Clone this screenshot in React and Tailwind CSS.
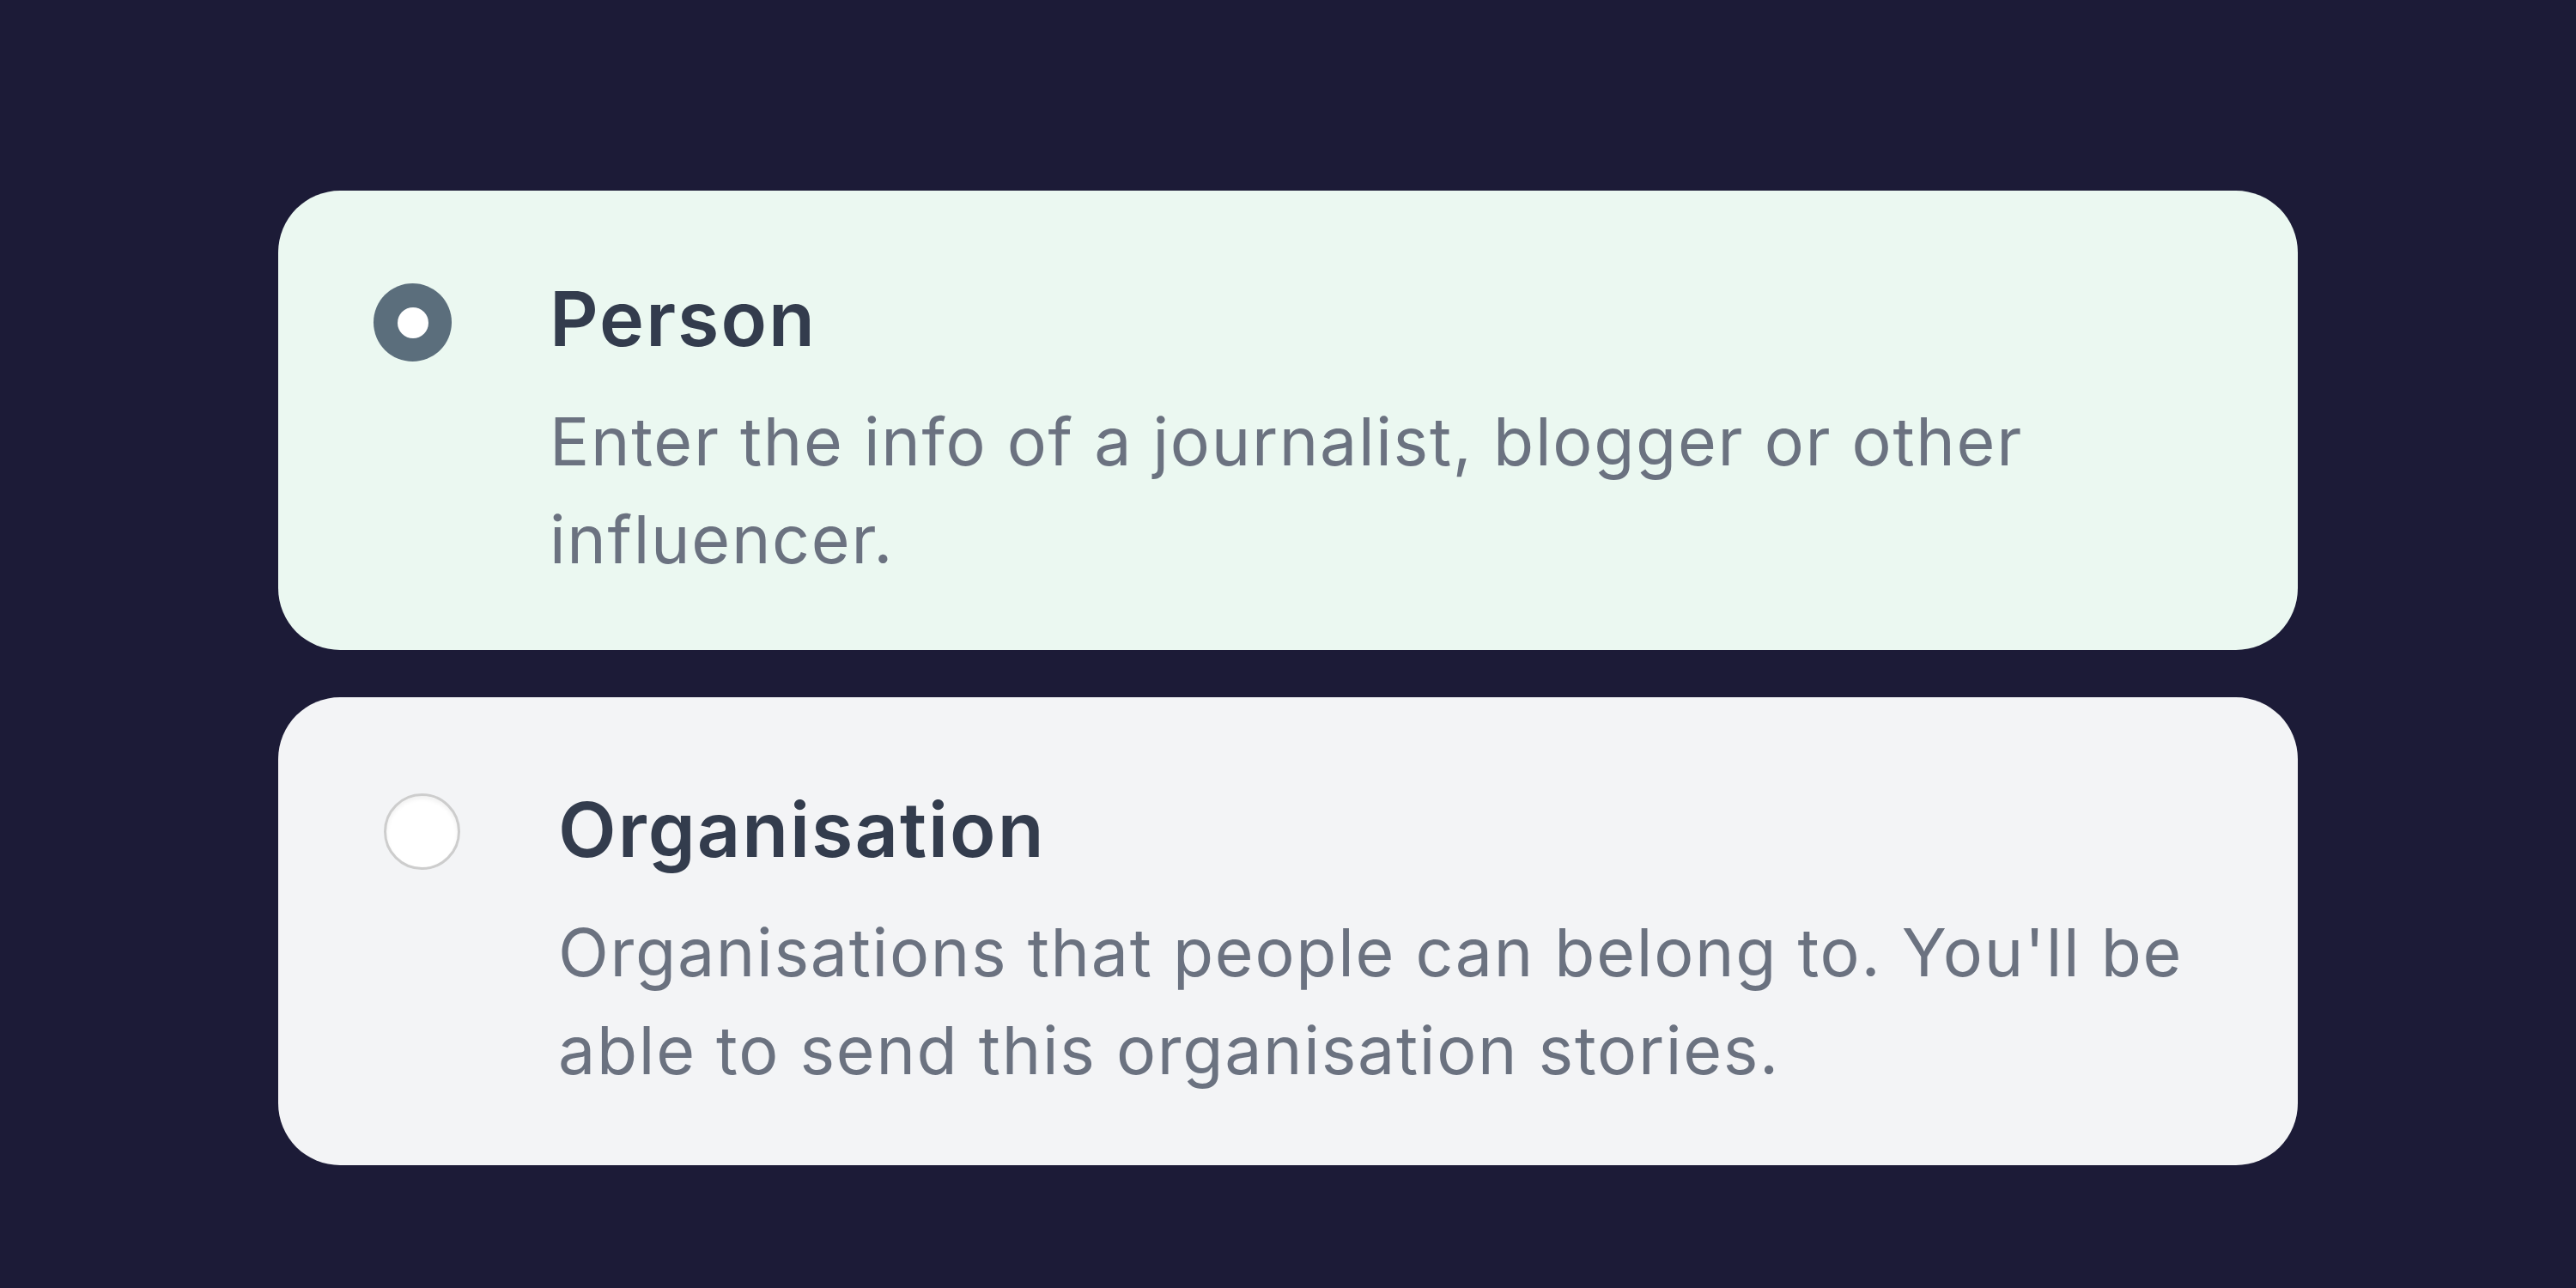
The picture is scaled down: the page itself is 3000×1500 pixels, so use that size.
import React from 'react';

const Radio = ({ checked }) =>
  checked ? (
    <span className="mt-[14px] flex h-[91px] w-[91px] shrink-0 items-center justify-center rounded-full bg-[#5b6e7c]">
      <span className="h-[36px] w-[36px] rounded-full bg-white" />
    </span>
  ) : (
    <span className="mt-[13px] block h-[89px] w-[89px] shrink-0 rounded-full border-[3px] border-[#cdcdcd] bg-white shadow-[inset_0_3px_5px_rgba(0,0,0,0.06)]" />
  );

const Option = ({ checked, title, description, className }) => (
  <div className={`flex items-start rounded-[72px] pr-[100px] ${className}`}>
    <Radio checked={checked} />
    <div className="ml-[114px] flex flex-col">
      <div className="text-[88px] font-semibold leading-[110px] tracking-[2px] text-[#333c4d]">{title}</div>
      <div className="mt-[31px] text-[77px] leading-[114px] tracking-[1.7px] text-[#6b7280]">{description}</div>
    </div>
  </div>
);

export default function App() {
  return (
    <div
      className="flex h-[1500px] w-[3000px] flex-col items-center bg-[#1c1b37] pt-[222px]"
      style={{ fontFamily: 'Inter, "Noto Sans", sans-serif' }}
    >
      <div className="flex w-[2352px] flex-col gap-[55px]">
        <Option
          checked
          title="Person"
          description="Enter the info of a journalist, blogger or other influencer."
          className="h-[535px] bg-[#ebf8f1] pl-[111px] pt-[94px]"
        />
        <Option
          title="Organisation"
          description="Organisations that people can belong to. You'll be able to send this organisation stories."
          className="h-[545px] bg-[#f3f4f6] pl-[123px] pt-[99px]"
        />
      </div>
    </div>
  );
}
